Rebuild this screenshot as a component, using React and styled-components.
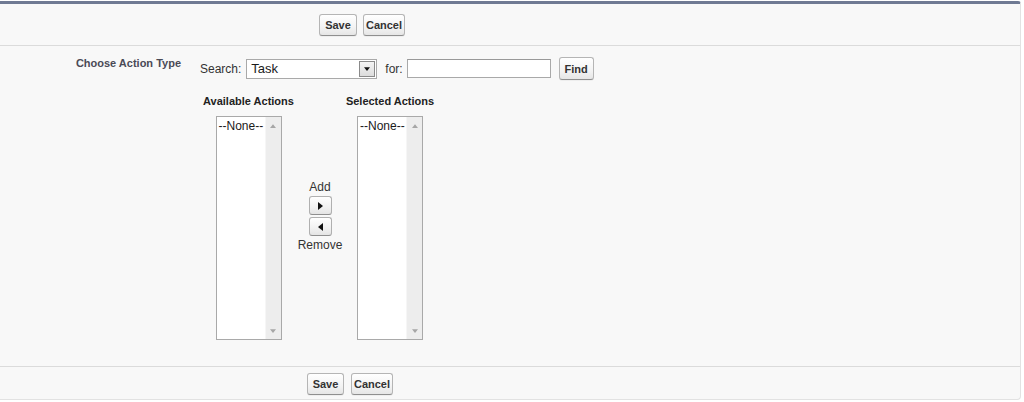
import React from 'react';
import styled, { createGlobalStyle } from 'styled-components';

const GlobalStyle = createGlobalStyle`
  body {
    margin: 0;
    background: #ffffff;
    font-family: "Liberation Sans", Arial, sans-serif;
    color: #222;
  }
`;

const Page = styled.div`
  box-sizing: border-box;
  width: 1021px;
  margin-top: 1px;
  background: #f8f8f8;
  border-top: 3px solid #6f7a93;
  border-right: 1px solid #e2e2e2;
  border-bottom: 1px solid #e2e2e2;
  border-radius: 0 3px 4px 0;
`;

const ButtonBar = styled.div`
  box-sizing: border-box;
  display: flex;
  align-items: ${(p) => (p.$bottom ? 'flex-start' : 'center')};
  gap: ${(p) => (p.$bottom ? 7 : 6)}px;
  height: ${(p) => (p.$bottom ? 32 : 42)}px;
  padding-left: ${(p) => (p.$bottom ? 307 : 319)}px;
  padding-top: ${(p) => (p.$bottom ? 6 : 0)}px;
  border-bottom: ${(p) => (p.$bottom ? 'none' : '1px solid #dbdbdb')};
`;

const Btn = styled.button`
  box-sizing: border-box;
  height: ${(p) => p.$h || 22}px;
  width: ${(p) => p.$w}px;
  padding: 0;
  font-family: "Liberation Sans", Arial, sans-serif;
  font-size: 11px;
  font-weight: bold;
  color: #333;
  background: linear-gradient(#ffffff, #f3f3f3 60%, #e6e6e6);
  border: 1px solid #b5b5b5;
  border-bottom-color: #8f8f8f;
  border-radius: 3px;
  box-shadow: 0 1px 0 rgba(0, 0, 0, 0.04);
  cursor: pointer;
`;

const Body = styled.div`
  box-sizing: border-box;
  display: grid;
  grid-template-columns: 184px 1fr;
  align-items: start;
  height: 321px;
  padding-top: 11px;
  border-bottom: 1px solid #dbdbdb;
`;

const Label = styled.div`
  padding-right: 3px;
  text-align: right;
  font-size: 11px;
  line-height: 13px;
  font-weight: bold;
  color: #4a4a56;
`;

const Content = styled.div`
  padding-left: 16px;
`;

const SearchRow = styled.div`
  display: flex;
  align-items: center;
  height: 23px;
`;

const Text = styled.span`
  font-size: 12px;
  color: #333;
  margin-left: ${(p) => p.$ml || 0}px;
`;

const Select = styled.div`
  box-sizing: border-box;
  display: flex;
  align-items: center;
  justify-content: space-between;
  width: 131px;
  height: 20px;
  margin-left: 5px;
  padding: 0 1px 0 4px;
  background: #fff;
  border: 1px solid #a9a9a9;
  font-size: 13px;
  color: #1a1a1a;
`;

const DropBtn = styled.span`
  box-sizing: border-box;
  display: flex;
  align-items: center;
  justify-content: center;
  width: 16px;
  height: 16px;
  background: linear-gradient(#f4f4f4, #dcdcdc);
  border: 1px solid #8a8a8a;
`;

const Input = styled.input`
  box-sizing: border-box;
  width: 144px;
  height: 19px;
  margin-left: 4px;
  background: #fff;
  border: 1px solid #a9a9a9;
  border-top-color: #999;
  outline: none;
`;

const FindWrap = styled.span`
  margin-left: 8px;
`;

const DualList = styled.div`
  display: grid;
  grid-template-columns: 97px 46px 94px;
  grid-template-rows: 13px 224px;
  row-gap: 8px;
  justify-items: center;
  margin-top: 15px;
`;

const ColHead = styled.div`
  font-size: 11px;
  line-height: 13px;
  font-weight: bold;
  color: #222;
  white-space: nowrap;
`;

const ListBox = styled.div`
  box-sizing: border-box;
  display: flex;
  width: 66px;
  height: 224px;
  background: #fff;
  border: 1px solid #a9a9a9;
`;

const Options = styled.div`
  flex: 1;
  padding: 2px 0 0 2px;
  font-size: 12px;
  line-height: 14px;
  color: #1a1a1a;
`;

const ScrollTrack = styled.div`
  display: flex;
  flex-direction: column;
  justify-content: space-between;
  align-items: center;
  width: 16px;
  padding: 7px 0 6px;
  box-sizing: border-box;
  background: #ededed;
  border-left: 1px solid #f6f6f6;
`;

const Middle = styled.div`
  display: flex;
  flex-direction: column;
  align-items: center;
  gap: 2px;
  padding-top: 64px;
  font-size: 12px;
  line-height: 14px;
  color: #333;
`;

const ArrowBtn = styled.button`
  box-sizing: border-box;
  display: flex;
  align-items: center;
  justify-content: center;
  width: 23px;
  height: 19px;
  padding: 0;
  background: linear-gradient(#ffffff, #f1f1f1 60%, #e4e4e4);
  border: 1px solid #b0b0b0;
  border-bottom-color: #8f8f8f;
  border-radius: 3px;
  cursor: pointer;
`;

const Tri = ({ dir, size = 4, color = '#111' }) => {
  const paths = {
    right: 'M0 0 L5 4 L0 8 Z',
    left: 'M5 0 L0 4 L5 8 Z',
    up: 'M0 5 L4 0 L8 5 Z',
    down: 'M0 0 L8 0 L4 5 Z',
  };
  const vert = dir === 'up' || dir === 'down';
  return (
    <svg width={vert ? size * 2 : size + 1} height={vert ? size + 1 : size * 2} viewBox={vert ? '0 0 8 5' : '0 0 5 8'}>
      <path d={paths[dir]} fill={color} />
    </svg>
  );
};

const Scroll = () => (
  <ScrollTrack>
    <Tri dir="up" size={3} color="#a6a6a6" />
    <Tri dir="down" size={3} color="#a6a6a6" />
  </ScrollTrack>
);

const App = () => (
  <>
    <GlobalStyle />
    <Page>
      <ButtonBar>
        <Btn $w={38}>Save</Btn>
        <Btn $w={42}>Cancel</Btn>
      </ButtonBar>
      <Body>
        <Label>Choose Action Type</Label>
        <Content>
          <SearchRow>
            <Text>Search:</Text>
            <Select>
              Task
              <DropBtn>
                <Tri dir="down" size={3} />
              </DropBtn>
            </Select>
            <Text $ml={8}>for:</Text>
            <Input type="text" />
            <FindWrap>
              <Btn $w={35} $h={23}>Find</Btn>
            </FindWrap>
          </SearchRow>
          <DualList>
            <ColHead>Available Actions</ColHead>
            <div />
            <ColHead>Selected Actions</ColHead>
            <ListBox>
              <Options>--None--</Options>
              <Scroll />
            </ListBox>
            <Middle>
              <span>Add</span>
              <ArrowBtn>
                <Tri dir="right" />
              </ArrowBtn>
              <ArrowBtn>
                <Tri dir="left" />
              </ArrowBtn>
              <span>Remove</span>
            </Middle>
            <ListBox>
              <Options>--None--</Options>
              <Scroll />
            </ListBox>
          </DualList>
        </Content>
      </Body>
      <ButtonBar $bottom>
        <Btn $w={37}>Save</Btn>
        <Btn $w={42}>Cancel</Btn>
      </ButtonBar>
    </Page>
  </>
);

export default App;
